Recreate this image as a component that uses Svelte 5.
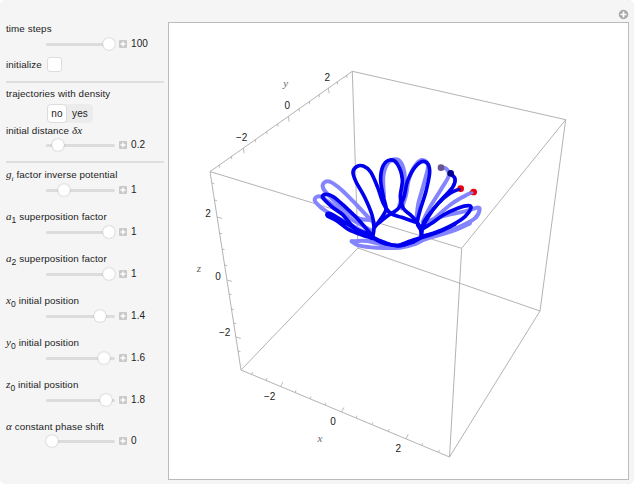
<script>
  const controls = [
    { type: 'slider', label: 'time steps', pos: 109, value: '100', tight: true },
    { type: 'check' },
    { type: 'rule' },
    { type: 'setter' },
    { type: 'slider', html: 'initial distance <i>δx</i>', pos: 58, value: '0.2', tight: true },
    { type: 'rule' },
    { type: 'slider', html: '<i>g<sub class="si">i</sub></i> factor inverse potential', pos: 64, value: '1' },
    { type: 'slider', html: '<i>a</i><sub>1</sub> superposition factor', pos: 109, value: '1' },
    { type: 'slider', html: '<i>a</i><sub>2</sub> superposition factor', pos: 109, value: '1' },
    { type: 'slider', html: '<i>x</i><sub>0</sub> initial position', pos: 100, value: '1.4' },
    { type: 'slider', html: '<i>y</i><sub>0</sub> initial position', pos: 104, value: '1.6' },
    { type: 'slider', html: '<i>z</i><sub>0</sub> initial position', pos: 106, value: '1.8' },
    { type: 'slider', html: '<i>α</i> constant phase shift', pos: 52, value: '0', tight: true }
  ];

  const A = [352.3, 71.3], B = [210, 171.6], C = [565.7, 119.7], D = [461.7, 248.3];
  const E = [241, 370], F = [449.5, 457], G = [540, 311], H = [358, 248];
  const edges = [[A,B],[A,C],[B,D],[C,D],[A,H],[B,E],[C,G],[D,F],[E,F],[F,G],[E,H],[H,G]];

  const onLine = (P, Q, t) => [P[0] + (Q[0]-P[0])*t, P[1] + (Q[1]-P[1])*t];
  const ticks = [];
  [[177,0],[214,0],[250,1],[286,0],[320,0],[353,0],[385,1],[417,0],[448,0],[477,0],[505,1],[532,0],[560,0]].forEach(([X,m]) => {
    const x = 160 + X/3, p = onLine(B, A, (x-B[0])/(A[0]-B[0]));
    ticks.push([p, m ? [0.8,5.2] : [0.4,2.6]]);
  });
  [[275,0],[318,0],[362,1],[405,0],[450,0],[495,0],[545,1],[588,0],[635,0],[685,0],[738,1],[785,0],[835,0]].forEach(([X,m]) => {
    const x = 160 + X/3, p = onLine(E, F, (x-E[0])/(F[0]-E[0]));
    ticks.push([p, m ? [2.2,-4.6] : [1.1,-2.3]]);
  });
  [[183,0],[200,0],[217,1],[233,0],[249,0],[265,0],[280,1],[294,0],[309,0],[323,0],[337,1],[351,0]].forEach(([y,m]) => {
    const p = onLine(B, E, (y-B[1])/(E[1]-B[1]));
    ticks.push([p, m ? [5,1.4] : [2.5,0.7]]);
  });

  const smooth = (pts) => {
    let d = `M${pts[0][0]} ${pts[0][1]}`;
    for (let i = 0; i < pts.length-1; i++) {
      const p0 = pts[i-1] || pts[i], p1 = pts[i], p2 = pts[i+1], p3 = pts[i+2] || p2;
      const c1 = [p1[0]+(p2[0]-p0[0])/6, p1[1]+(p2[1]-p0[1])/6];
      const c2 = [p2[0]-(p3[0]-p1[0])/6, p2[1]-(p3[1]-p1[1])/6];
      d += `C${c1[0].toFixed(1)} ${c1[1].toFixed(1)} ${c2[0].toFixed(1)} ${c2[1].toFixed(1)} ${p2[0]} ${p2[1]}`;
    }
    return d;
  };

  const light = [
    [[225,252],[205,232],[170,195],[125,150],[92,126],[72,128],[70,146],[92,172],[130,205],[175,235],[215,240]],
    [[215,272],[150,235],[100,196],[62,170],[46,174],[48,188],[80,215],[130,242],[180,270],[215,285]],
    [[155,304],[200,303],[260,316],[300,318]],
    [[155,304],[175,316],[230,323],[300,323],[345,312],[372,298]],
    [[252,170],[250,110],[262,72],[285,58],[303,68],[314,105],[312,150],[298,195]],
    [[305,205],[318,165],[326,120],[342,82],[365,60],[384,76],[372,130],[355,190],[350,232]],
    [[423,83],[440,87],[446,108],[422,150],[392,198],[368,245]],
    [[520,155],[490,170],[450,195],[410,230],[378,258]],
    [[380,245],[430,228],[495,214],[530,203],[539,208],[525,235],[480,260],[420,282],[340,310]],
    [[510,250],[465,270],[400,290]]
  ];
  const dark = [
    [[218,292],[222,262],[216,225],[194,172],[168,125],[159,97],[170,80],[190,78],[212,96],[233,142],[250,190],[272,220],[305,232],[345,246]],
    [[222,264],[240,240],[258,208],[250,170],[242,120],[249,78],[270,60],[292,72],[307,118],[301,170],[310,205],[335,228],[358,256]],
    [[235,250],[262,228],[295,205],[312,170],[323,122],[348,78],[375,65],[389,92],[379,150],[359,215],[352,250],[362,270],[365,288]],
    [[215,290],[250,306],[295,318],[340,305],[368,290]],
    [[215,293],[255,311],[300,316],[340,306]],
    [[450,100],[465,116],[458,142],[425,178],[390,220],[370,250],[365,282]],
    [[481,146],[450,160],[415,190],[385,230],[365,270],[365,290]],
    [[362,270],[395,250],[430,225],[475,204],[505,197],[513,204],[495,230],[455,256],[400,280],[362,290]],
    [[465,252],[430,270],[390,285],[340,300],[300,315]],
    [[215,285],[178,242],[135,200],[100,170],[78,163],[68,172],[95,200],[128,224],[155,256],[190,283],[215,295]],
    [[215,285],[170,268],[130,245],[100,225],[85,220],[82,228],[110,242],[145,268],[200,290]]
  ];
  const lightPaths = light.map(smooth), darkPaths = dark.map(smooth);
</script>

<div class="panel">
  <aside class="side">
    {#each controls as c}
      {#if c.type === 'rule'}
        <div class="rule"></div>
      {:else if c.type === 'check'}
        <div class="checkrow"><span class="lab">initialize</span><span class="check"></span></div>
      {:else if c.type === 'setter'}
        <div class="lab short">trajectories with density</div>
        <div class="setter"><span class="on">no</span><span class="off">yes</span></div>
      {:else}
        <div class="lab" class:tight={c.tight}>{#if c.html}{@html c.html}{:else}{c.label}{/if}</div>
        <div class="sliderrow" class:tight={c.tight}>
          <div class="track"><span class="thumb" style="left:{c.pos - 46 - 6}px"></span></div>
          <svg class="plus" viewBox="0 0 8 8"><rect width="8" height="8" rx="1" fill="#c9c9c9"/><path d="M4 1.5v5M1.5 4h5" stroke="#fff" stroke-width="1.4"/></svg>
          <span class="val">{c.value}</span>
        </div>
      {/if}
    {/each}
  </aside>

  <div class="plot">
    <svg class="scene" viewBox="168 22 460 457" width="460" height="457">
      {#each edges as [p, q]}
        <line x1={p[0]} y1={p[1]} x2={q[0]} y2={q[1]} stroke="#aaa" stroke-width="0.9"/>
      {/each}
      {#each ticks as [p, d]}
        <line x1={p[0]} y1={p[1]} x2={p[0]+d[0]} y2={p[1]+d[1]} stroke="#aaa" stroke-width="0.8"/>
      {/each}
      <g class="num">
        <text x="327.3" y="80.5">2</text>
        <text x="287.3" y="108.5">0</text>
        <text x="241.7" y="140.5">−2</text>
        <text x="208" y="216.8">2</text>
        <text x="218" y="279.8">0</text>
        <text x="224.7" y="335.5">−2</text>
        <text x="269.7" y="399.5">−2</text>
        <text x="333" y="424.8">0</text>
        <text x="398.3" y="452">2</text>
      </g>
      <g class="axis">
        <text x="285.7" y="87">y</text>
        <text x="199" y="272">z</text>
        <text x="320" y="441.5">x</text>
      </g>
      <g transform="translate(300 140) scale(0.33333)" fill="none" stroke-linecap="round" stroke-linejoin="round">
        {#each lightPaths as d}<path {d} stroke="#8484ff" stroke-width="12"/>{/each}
        {#each darkPaths as d}<path {d} stroke="#0000ee" stroke-width="11"/>{/each}
        <circle cx="423" cy="83" r="10" fill="#66558f" stroke="none"/>
        <circle cx="452" cy="100" r="10" fill="#00008c" stroke="none"/>
        <circle cx="482" cy="146" r="10" fill="#e8000c" stroke="none"/>
        <circle cx="477" cy="148" r="5" fill="#0000d0" stroke="none"/>
        <circle cx="521" cy="156" r="10" fill="#e8000c" stroke="none"/>
        <circle cx="516" cy="158" r="4.5" fill="#8484ff" stroke="none"/>
      </g>
    </svg>
    <svg class="more" viewBox="0 0 12 12"><circle cx="6" cy="6" r="5.2" fill="#a9a9a9"/><path d="M6 2.8v6.4M2.8 6h6.4" stroke="#fff" stroke-width="1.8"/></svg>
  </div>
</div>

<style>
  :global(body) { margin: 0; background: #fff; }
  .panel {
    width: 634px; height: 484px; box-sizing: border-box;
    background: #f5f5f5; border-radius: 7px;
    display: flex; padding: 22px 6px 6px 6px; gap: 4px;
    font-family: "Liberation Sans", Arial, sans-serif;
    box-shadow: 0 0 1px #ddd;
  }
  .side {
    width: 158px; flex: none; display: flex; flex-direction: column;
    font-size: 9.8px; letter-spacing: 0.1px; color: #222;
  }
  .lab { height: 16px; line-height: 14px; white-space: nowrap; flex: none; }
  .lab.tight { height: 15px; }
  .lab.short { height: 14px; }
  .lab :global(i) { font-family: "Liberation Serif", serif; font-size: 11px; }
  .lab :global(sub) { font-size: 8.5px; line-height: 0; vertical-align: -2.5px; }
  .lab :global(sub.si) { font-size: 7px; }
  .sliderrow {
    height: 26px; flex: none; display: flex; align-items: flex-start; padding-left: 40px;
  }
  .sliderrow.tight { height: 14px; }
  .track {
    position: relative; width: 69px; height: 3px; margin-top: 5.5px;
    background: #dcdcdc; border-radius: 2px; flex: none;
  }
  .thumb {
    position: absolute; top: -4.5px; width: 12px; height: 12px; border-radius: 50%;
    background: #fff; box-shadow: 0 0 1.5px rgba(0,0,0,.35);
  }
  .plus { width: 8px; height: 8px; margin: 3px 0 0 4px; flex: none; }
  .val { margin-left: 4px; font-size: 10px; line-height: 14px; }
  .checkrow { display: flex; align-items: center; gap: 5px; height: 15px; margin-top: 6px; white-space: nowrap; flex: none; }
  .checkrow .lab { height: 14px; }
  .check {
    width: 13px; height: 13px; background: #fff; border: 1px solid #ddd; border-radius: 3px; flex: none;
  }
  .rule { height: 2px; background: #dfdfdf; margin: 9px 0 4px; flex: none; }
  .setter {
    display: flex; align-self: flex-start; margin: 3px 0 0 41px; height: 19px; line-height: 19px; font-size: 10px;
    background: #ececec; border-radius: 4px; flex: none;
  }
  .on { width: 18px; text-align: center; background: #fff; border: 1px solid #ddd; border-radius: 4px; height: 17px; line-height: 17px; }
  .off { width: 26px; text-align: center; }
  .plot {
    position: relative; width: 461px; height: 458px;
    background: #fff; border: 1px solid #bbb; box-sizing: border-box; flex: none;
  }
  .scene { position: absolute; left: -1px; top: -1px; display: block; }
  .num text { font-size: 10px; fill: #222; text-anchor: middle; }
  .axis text { font-size: 11px; font-style: italic; fill: #666; text-anchor: middle; font-family: "Liberation Serif", serif; }
  .more { position: absolute; right: -1px; top: -14px; width: 11px; height: 11px; }
</style>
